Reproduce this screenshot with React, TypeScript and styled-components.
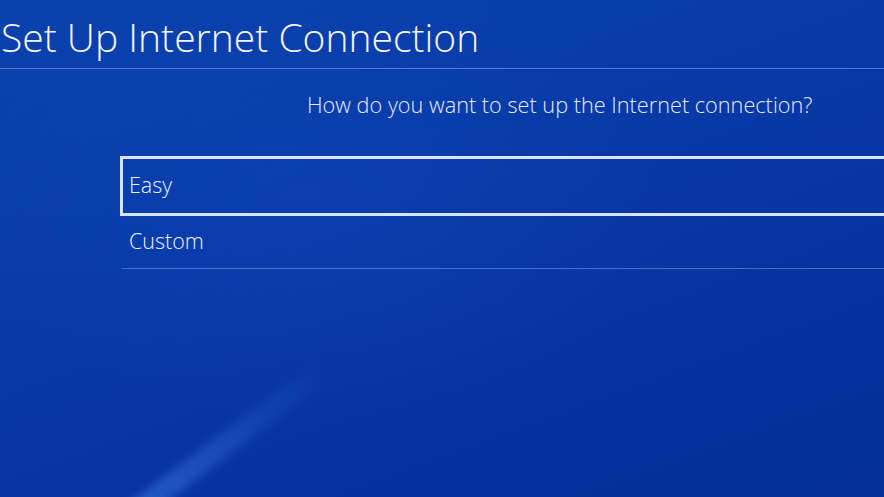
import { createGlobalStyle, styled } from 'styled-components'

const GlobalStyle = createGlobalStyle`
  html, body {
    margin: 0;
    padding: 0;
    overflow: hidden;
  }
  body {
    font-family: "Open Sans", "Noto Sans", sans-serif;
    background: #0638a4;
  }
`

const Screen = styled.div`
  position: relative;
  width: 884px;
  height: 497px;
  overflow: hidden;
  color: #f2f5fc;
  background:
    radial-gradient(ellipse 520px 320px at 35% 40%, rgba(20, 70, 190, 0.3), transparent 70%),
    linear-gradient(160deg, #0b42ad 0%, #073aa8 40%, #0534a0 70%, #032e96 100%);
`

// soft light streak in the lower-left corner of the backdrop
const Streak = styled.div`
  position: absolute;
  left: 130px;
  top: 505px;
  width: 240px;
  height: 22px;
  transform: rotate(-37deg);
  transform-origin: left center;
  background: linear-gradient(90deg, rgba(70, 130, 230, 0.5), rgba(60, 120, 225, 0.28) 55%, transparent);
  filter: blur(4px);
  pointer-events: none;
`

const Header = styled.header`
  height: 68px;
  border-bottom: 1px solid rgba(150, 180, 235, 0.55);
  display: flex;
  align-items: flex-end;
  padding-left: 1px;
`

const Title = styled.h1`
  margin: 0 0 12px;
  font-size: 39px;
  font-weight: 300;
  line-height: 1;
`

const Content = styled.main`
  position: relative;
  padding-left: 120px;
`

const Prompt = styled.p`
  margin: 23px 0 0;
  padding-left: 187px;
  font-size: 21.7px;
  font-weight: 300;
  line-height: 26px;
  color: #e6ecf8;
`

const Options = styled.ul`
  list-style: none;
  margin: 38px 0 0;
  padding: 0;
`

const Option = styled.li<{ $focused?: boolean }>`
  height: 53px;
  display: flex;
  align-items: center;
  font-size: 21.5px;
  font-weight: 300;
  color: #eef2fb;
  box-sizing: border-box;
  ${(p) =>
    p.$focused
      ? `
    height: 60px;
    padding-left: 6px;
    padding-bottom: 3px;
    border: 3px solid #dbe4f6;
    border-right: none;
  `
      : `
    padding-left: 7px;
    padding-bottom: 3px;
    margin-left: 2px;
    border-bottom: 1px solid rgba(140, 170, 230, 0.5);
  `}
`

export default function App() {
  return (
    <>
      <GlobalStyle />
      <Screen>
        <Streak />
        <Header>
          <Title>Set Up Internet Connection</Title>
        </Header>
        <Content>
          <Prompt>How do you want to set up the Internet connection?</Prompt>
          <Options>
            <Option $focused>Easy</Option>
            <Option>Custom</Option>
          </Options>
        </Content>
      </Screen>
    </>
  )
}
